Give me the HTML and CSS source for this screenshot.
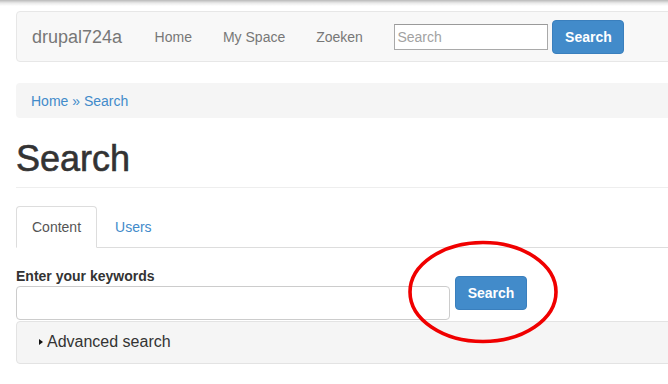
FILE: index.html
```html
<!DOCTYPE html>
<html>
<head>
<meta charset="utf-8">
<link rel="stylesheet" href="styles.css">
</head>
<body>
<div class="topshade"></div>
<div class="page">
  <nav class="navbar">
    <a class="brand">drupal724a</a>
    <a class="navlink">Home</a>
    <a class="navlink">My Space</a>
    <a class="navlink">Zoeken</a>
    <form class="navform">
      <input class="navinput" type="text" placeholder="Search">
      <button class="btn btn-nav" type="button">Search</button>
    </form>
  </nav>
  <div class="breadcrumb"><a>Home</a> » <a>Search</a></div>
  <h1 class="page-header">Search</h1>
  <ul class="tabs">
    <li class="tab active">Content</li>
    <li class="tab">Users</li>
  </ul>
  <div class="searchrow">
    <div class="field">
      <label class="label">Enter your keywords</label>
      <input class="keywords" type="text">
    </div>
    <div class="btnwrap">
      <button class="btn btn-main" type="button">Search</button>
      <svg class="circle" width="160" height="112" viewBox="0 0 160 112">
        <ellipse cx="80" cy="56" rx="73" ry="49.5" fill="none" stroke="#f00000" stroke-width="3.6"/>
      </svg>
    </div>
  </div>
  <div class="advanced"><span class="caret"></span>Advanced search</div>
</div>
</body>
</html>
```
FILE: styles.css
```css
html, body {
  margin: 0;
  padding: 0;
  background: #fff;
  overflow: hidden;
}
body {
  font-family: "Liberation Sans", Arial, sans-serif;
  font-size: 14px;
  color: #333;
  width: 668px;
  height: 384px;
}
.topshade {
  height: 6px;
  background: linear-gradient(#b9b9b9, #e9e9e9 50%, #fff);
}
.page {
  padding-left: 16px;
  width: 700px;
}
.navbar {
  margin-top: 5px;
  height: 49px;
  border: 1px solid #e7e7e7;
  border-radius: 4px;
  background: #f8f8f8;
  display: flex;
  align-items: center;
}
.brand {
  font-size: 18px;
  color: #777;
  padding: 0 17px 0 15px;
  line-height: 20px;
}
.navlink {
  font-size: 14px;
  color: #777;
  padding: 0 15.5px;
  line-height: 20px;
}
.navform {
  margin: 0 0 0 16px;
  display: flex;
  align-items: center;
  gap: 4px;
}
.navinput {
  box-sizing: border-box;
  width: 154px;
  height: 26px;
  border: 1px solid #a9a9a9;
  border-top-color: #9a9a9a;
  padding: 0 2px;
  margin: 0;
  font-family: "Liberation Sans", Arial, sans-serif;
  font-size: 14px;
  background: #fff;
}
.navinput::placeholder { color: #a2a2a2; }
.btn {
  box-sizing: border-box;
  border: 1px solid #3a7fbd;
  background: #428bca;
  color: #fff;
  border-radius: 4px;
  font-family: "Liberation Sans", Arial, sans-serif;
  font-size: 14px;
  font-weight: bold;
  padding: 0;
  margin: 0;
}
.btn-nav {
  width: 72px;
  height: 34px;
}
.breadcrumb {
  margin-top: 21px;
  height: 35px;
  box-sizing: border-box;
  padding: 8px 15px;
  line-height: 20px;
  background: #f5f5f5;
  border-radius: 4px;
  color: #428bca;
}
.breadcrumb a { color: #428bca; }
.page-header {
  margin: 21px 0 0;
  font-size: 36px;
  font-weight: 500;
  line-height: 40px;
  padding-bottom: 8px;
  border-bottom: 1px solid #eee;
  color: #333;
  -webkit-text-stroke: 0.6px #333;
}
.tabs {
  list-style: none;
  margin: 18px 0 0;
  padding: 0;
  display: flex;
  border-bottom: 1px solid #ddd;
  height: 41px;
}
.tab {
  box-sizing: border-box;
  height: 42px;
  padding: 10px 15px;
  line-height: 20px;
  border: 1px solid transparent;
  border-radius: 4px 4px 0 0;
  margin-right: 2px;
  color: #428bca;
}
.tab.active {
  color: #555;
  background: #fff;
  border-color: #ddd #ddd transparent;
}
.searchrow {
  margin-top: 18px;
  display: flex;
  align-items: flex-start;
}
.field {
  display: flex;
  flex-direction: column;
}
.label {
  font-weight: bold;
  font-size: 14px;
  line-height: 20px;
  color: #333;
}
.keywords {
  box-sizing: border-box;
  width: 434px;
  height: 34px;
  border: 1px solid #ccc;
  border-radius: 4px;
  margin: 0;
  background: #fff;
}
.btnwrap {
  position: relative;
  margin-left: 5px;
  margin-top: 10px;
}
.btn-main {
  width: 72px;
  height: 34px;
  display: block;
}
.circle {
  position: absolute;
  left: -52px;
  top: -40px;
  pointer-events: none;
  z-index: 2;
}
.advanced {
  margin-top: 1px;
  height: 43px;
  box-sizing: border-box;
  border: 1px solid #e3e3e3;
  border-radius: 4px;
  background: #f5f5f5;
  font-size: 16px;
  line-height: 20px;
  padding: 10px 0 0 22px;
  display: flex;
  align-items: flex-start;
  color: #333;
}
.caret {
  width: 0;
  height: 0;
  border-top: 3.5px solid transparent;
  border-bottom: 3.5px solid transparent;
  border-left: 4px solid #111;
  margin: 7px 4px 0 0;
}
```
